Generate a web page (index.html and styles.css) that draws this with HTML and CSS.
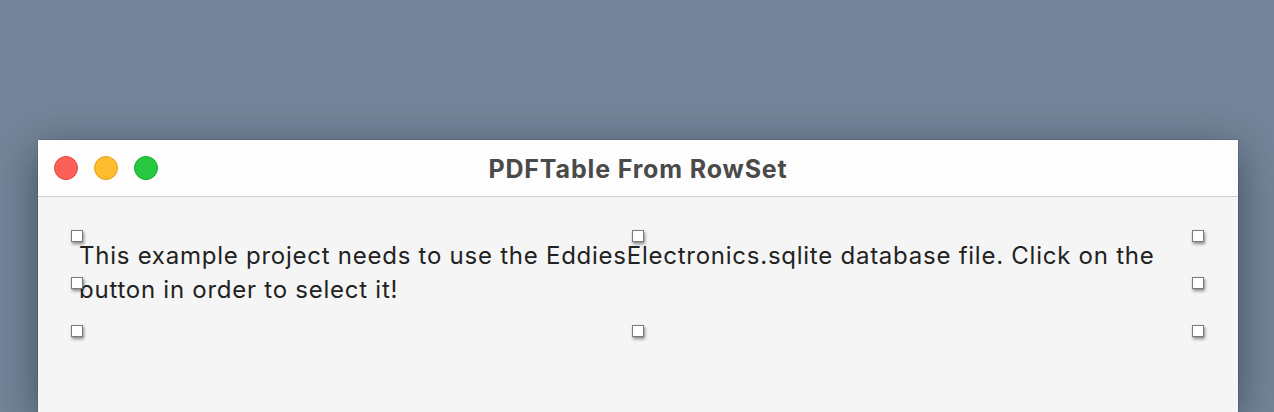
FILE: index.html
```html
<!DOCTYPE html>
<html>
<head>
<meta charset="utf-8">
<link rel="stylesheet" href="styles.css">
</head>
<body>
<div class="desktop">
  <div class="window">
    <div class="titlebar">
      <div class="lights">
        <span class="light red"></span>
        <span class="light yellow"></span>
        <span class="light green"></span>
      </div>
      <div class="title">PDFTable From RowSet</div>
    </div>
    <div class="content">
      <div class="label">
        <p class="label-text">This example project needs to use the EddiesElectronics.sqlite database file. Click on the button in order to select it!</p>
        <span class="handle h-tl"></span>
        <span class="handle h-tc"></span>
        <span class="handle h-tr"></span>
        <span class="handle h-ml"></span>
        <span class="handle h-mr"></span>
        <span class="handle h-bl"></span>
        <span class="handle h-bc"></span>
        <span class="handle h-br"></span>
      </div>
    </div>
  </div>
</div>
</body>
</html>
```
FILE: styles.css
```css
html, body {
  margin: 0;
  padding: 0;
  width: 1274px;
  height: 412px;
  overflow: hidden;
}
.desktop {
  width: 1274px;
  height: 412px;
  background: #758599;
  padding-top: 140px;
  padding-left: 38px;
  box-sizing: border-box;
  overflow: hidden;
}
.window {
  width: 1200px;
  height: 272px;
  background: #f5f5f5;
  box-shadow: 0 10px 40px rgba(20, 30, 45, 0.55), 0 0 0 0.5px rgba(0,0,0,0.2);
  display: flex;
  flex-direction: column;
}
.titlebar {
  position: relative;
  height: 56px;
  background: #fdfdfd;
  border-bottom: 1px solid #cfcfcf;
  display: flex;
  align-items: center;
  justify-content: center;
  flex: none;
}
.lights {
  position: absolute;
  left: 16px;
  top: 16px;
  display: flex;
  gap: 16px;
}
.light {
  width: 24px;
  height: 24px;
  border-radius: 50%;
  box-sizing: border-box;
}
.red { background: #fe5f57; border: 1px solid #e2463f; }
.yellow { background: #febc2e; border: 1px solid #e1a116; }
.green { background: #28c840; border: 1px solid #14ae2b; }
.title {
  font-family: Inter, "Noto Sans", sans-serif;
  font-weight: 700;
  font-size: 25px;
  color: #4a4a4a;
  letter-spacing: 0.85px;
  margin-top: 1px;
}
.content {
  flex: 1;
  padding: 40px 0 0 40px;
}
.label {
  position: relative;
  width: 1120px;
  height: 93px;
}
.label-text {
  margin: 0;
  padding: 2px 0 0 1px;
  font-family: Inter, "Noto Sans", sans-serif;
  font-size: 24px;
  line-height: 34px;
  color: #222222;
  letter-spacing: 0.75px;
}
.handle {
  position: absolute;
  width: 10px;
  height: 10px;
  background: #ffffff;
  border: 1px solid #7a7a7a;
  box-shadow: 1px 2px 3px rgba(0,0,0,0.45);
}
.h-tl { left: -7px; top: -7px; }
.h-tc { left: 554px; top: -7px; }
.h-tr { left: 1114px; top: -7px; }
.h-ml { left: -7px; top: 40px; }
.h-mr { left: 1114px; top: 40px; }
.h-bl { left: -7px; top: 88px; }
.h-bc { left: 554px; top: 88px; }
.h-br { left: 1114px; top: 88px; }
```
